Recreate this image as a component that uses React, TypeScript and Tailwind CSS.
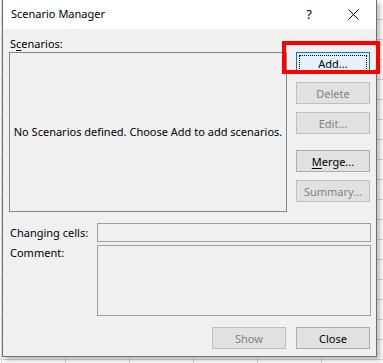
import React from "react";

const font = { fontFamily: '"Noto Sans", "Open Sans", sans-serif' };

function Btn({
  children,
  disabled,
  focused,
}: {
  children: React.ReactNode;
  disabled?: boolean;
  focused?: boolean;
}) {
  const base =
    "w-[74px] h-[22px] shrink-0 flex items-center justify-center text-[11px] leading-none border whitespace-nowrap";
  let cls = "";
  if (focused) {
    cls =
      "bg-[#e5f1fb] border-[#0078d7] text-black outline-1 outline-dotted outline-black outline-offset-[-4px]";
  } else if (disabled) {
    cls = "bg-[#e1e1e1] border-[#bfbfbf] text-[#838383]";
  } else {
    cls = "bg-[#e1e1e1] border-[#adadad] text-black";
  }
  return <div className={`${base} ${cls}`}>{children}</div>;
}

export default function App() {
  return (
    <div
      className="relative w-[383px] h-[363px] overflow-hidden bg-white bg-[linear-gradient(to_right,#d8d8d8_1px,transparent_1px),linear-gradient(to_bottom,#d8d8d8_1px,transparent_1px)] bg-[size:64px_20px] bg-[position:1px_19px]"
      style={font}
    >
      <div className="ml-[2px] w-[375px] h-[357px] border-x border-b border-[#707070] bg-[#f0f0f0] flex flex-col shadow-[3px_3px_5px_rgba(0,0,0,0.28)]">
        {/* Title bar */}
        <div className="h-[29px] bg-white flex items-center shrink-0">
          <span className="pl-[8px] text-[11px] text-black whitespace-nowrap">Scenario Manager</span>
          <div className="ml-auto flex items-center h-full">
            <div className="w-[46px] h-full flex items-center justify-center text-[13px] text-black pl-[4px]">
              ?
            </div>
            <div className="w-[46px] h-full flex items-center justify-center">
              <svg width="11" height="11" viewBox="0 0 11 11">
                <path d="M0.5 0.5 L10.5 10.5 M10.5 0.5 L0.5 10.5" stroke="#000" strokeWidth="1" />
              </svg>
            </div>
          </div>
        </div>

        {/* Body */}
        <div className="flex flex-col px-[6px] pt-[7px] text-[11px] text-black">
          <div className="h-[16px] leading-[16px] pl-[1px]">
            S<span className="underline underline-offset-2">c</span>enarios:
          </div>
          <div className="flex gap-[9px]">
            <div className="w-[278px] h-[160px] shrink-0 border border-[#828790] flex items-center justify-center whitespace-nowrap">
              No Scenarios defined. Choose Add to add scenarios.
            </div>
            <div className="flex flex-col">
              <Btn focused>
                <span>
                  <span className="underline underline-offset-2">A</span>dd...
                </span>
              </Btn>
              <div className="h-[8px]" />
              <Btn disabled>Delete</Btn>
              <div className="h-[8px]" />
              <Btn disabled>Edit...</Btn>
              <div className="h-[16px]" />
              <Btn>
                <span>
                  <span className="underline underline-offset-2">M</span>erge...
                </span>
              </Btn>
              <div className="h-[8px]" />
              <Btn disabled>Summary...</Btn>
            </div>
          </div>

          <div className="flex mt-[11px]">
            <div className="w-[88px] shrink-0 leading-[19px] pl-[1px] whitespace-nowrap">Changing cells:</div>
            <div className="w-[274px] h-[19px] shrink-0 border border-[#a0a0a0]" />
          </div>
          <div className="flex mt-[3px]">
            <div className="w-[88px] shrink-0 leading-[15px] pl-[1px]">Comment:</div>
            <div className="w-[274px] h-[71px] shrink-0 border border-[#a0a0a0]" />
          </div>

          <div className="flex justify-end gap-[10px] mt-[11px]">
            <Btn disabled>Show</Btn>
            <Btn>Close</Btn>
          </div>
        </div>
      </div>

      {/* Red highlight annotation */}
      <div className="absolute left-[282px] top-[41px] w-[98px] h-[33px] border-4 border-[#ff0000]" />
    </div>
  );
}
